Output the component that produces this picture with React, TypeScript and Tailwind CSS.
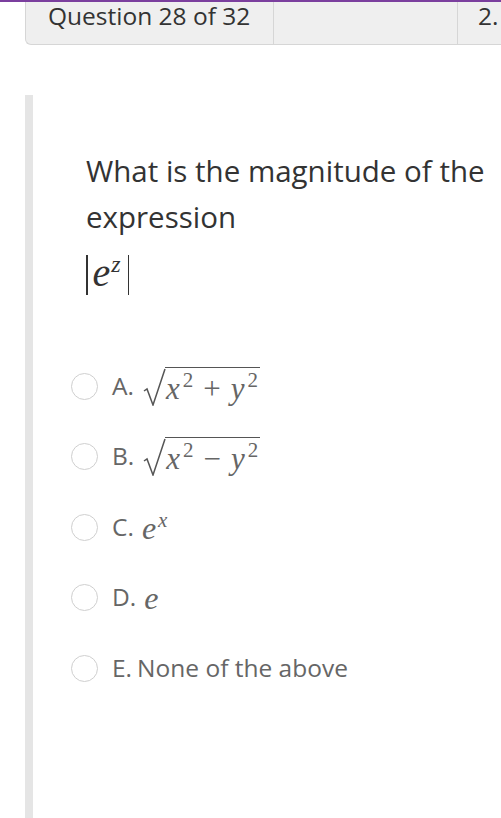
import React from "react";

const sans = { fontFamily: '"Open Sans", "Liberation Sans", sans-serif' };

const Radical = ({ children }: { children: React.ReactNode }) => (
  <span className="inline-flex items-end">
    <svg width="23" height="38" viewBox="0 0 23 38" className="-mr-[1px]">
      <path d="M1 23 L4 21 L10 37 L22 1" fill="none" stroke="#555" strokeWidth="1.5" />
    </svg>
    <span className="border-t-[1.5px] border-[#555] pt-[3px] leading-[32px]">{children}</span>
  </span>
);

const M = ({ children }: { children: React.ReactNode }) => (
  <span className="italic" style={{ fontFamily: '"Liberation Serif", "DejaVu Serif", serif' }}>
    {children}
  </span>
);

const R = ({ children }: { children: React.ReactNode }) => (
  <span style={{ fontFamily: '"Liberation Serif", "DejaVu Serif", serif' }}>{children}</span>
);

const Sq = () => (
  <sup className="text-[21px] relative -top-[12px] ml-[3px]">
    <R>2</R>
  </sup>
);

const Option = ({ label, children }: { label: string; children: React.ReactNode }) => (
  <div className="flex items-center h-[40px]">
    <span className="w-[27px] h-[27px] rounded-full border border-[#cfcfcf] bg-white shrink-0 -ml-[15px]" />
    <span className="ml-[14px] text-[24.5px] text-[#666] flex items-center gap-[9px]" style={sans}>
      <span>{label}</span>
      {children}
    </span>
  </div>
);

export default function App() {
  return (
    <div className="w-[501px] h-[818px] bg-white overflow-hidden relative" style={sans}>
      <div className="h-[2px] bg-[#7b3f9e]" />
      <div className="ml-[25px] flex h-[43px] bg-[#efefef] border-b border-l border-[#d6d6d6] rounded-bl-[6px] text-[24.5px] text-[#333]">
        <div className="w-[248px] pl-[22px] leading-[28px] border-r border-[#d6d6d6] whitespace-nowrap">Question 28 of 32</div>
        <div className="w-[184px] border-r border-[#d6d6d6]" />
        <div className="flex-1 pl-[20px] leading-[28px] whitespace-nowrap">2.</div>
      </div>
      <div className="mt-[50px] ml-[25px] flex h-[723px]">
        <div className="w-[8px] bg-[#e5e5e5] shrink-0" />
        <div className="pl-[53px] pt-[53px] flex-1">
          <div className="text-[29.5px] leading-[46px] text-[#333] whitespace-nowrap">
            What is the magnitude of the
            <br />
            expression
          </div>
          <div className="mt-[14px] flex items-center h-[42px] text-[#333]">
            <span className="w-[1.5px] h-[40px] bg-[#333] mr-[5px]" />
            <span className="text-[40px] leading-none -mt-[6px]">
              <M>e</M>
              <sup className="text-[24px] relative -top-[14px] ml-[1px]">
                <M>z</M>
              </sup>
            </span>
            <span className="w-[1.5px] h-[40px] bg-[#333] ml-[7px]" />
          </div>
          <div className="mt-[70px] flex flex-col gap-[30.5px] text-[#555]">
            <Option label="A.">
              <Radical>
                <span className="text-[31px] pl-[1px] pr-[2px]">
                  <M>x</M>
                  <Sq />
                  <R><span className="mx-[10px]">+</span></R>
                  <M>y</M>
                  <Sq />
                </span>
              </Radical>
            </Option>
            <Option label="B.">
              <Radical>
                <span className="text-[31px] pl-[1px] pr-[2px]">
                  <M>x</M>
                  <Sq />
                  <R><span className="mx-[10px]">−</span></R>
                  <M>y</M>
                  <Sq />
                </span>
              </Radical>
            </Option>
            <Option label="C.">
              <span className="text-[32px] leading-none -ml-[1px]">
                <M>e</M>
                <sup className="text-[21px] relative -top-[12px] ml-[2px]"><M>x</M></sup>
              </span>
            </Option>
            <Option label="D.">
              <span className="text-[32px] leading-none -ml-[1px]">
                <M>e</M>
              </span>
            </Option>
            <Option label="E.">
              <span className="-ml-[4px]">None of the above</span>
            </Option>
          </div>
        </div>
      </div>
    </div>
  );
}
